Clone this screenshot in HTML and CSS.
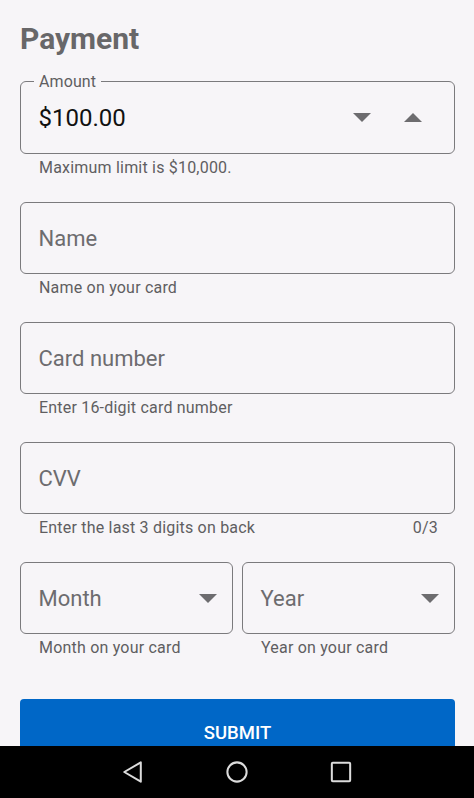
FILE: index.html
```html
<!DOCTYPE html>
<html lang="en">
<head>
<meta charset="utf-8">
<title>Payment</title>
<link rel="stylesheet" href="styles.css">
</head>
<body>
<main class="page">
  <h1 class="title">Payment</h1>

  <div class="group">
    <div class="box box-labelled">
      <span class="notch-label">Amount</span>
      <span class="value">$100.00</span>
      <span class="spin">
        <svg class="tri" viewBox="0 0 18 9"><path d="M0 0H18L9 9Z"/></svg>
        <svg class="tri" viewBox="0 0 18 9"><path d="M0 9H18L9 0Z"/></svg>
      </span>
    </div>
    <div class="helper"><span>Maximum limit is $10,000.</span></div>
  </div>

  <div class="group">
    <div class="box"><span class="placeholder">Name</span></div>
    <div class="helper"><span>Name on your card</span></div>
  </div>

  <div class="group">
    <div class="box"><span class="placeholder">Card number</span></div>
    <div class="helper"><span>Enter 16-digit card number</span></div>
  </div>

  <div class="group">
    <div class="box"><span class="placeholder">CVV</span></div>
    <div class="helper"><span>Enter the last 3 digits on back</span><span>0/3</span></div>
  </div>

  <div class="row">
    <div class="group">
      <div class="box box-select"><span class="placeholder">Month</span>
        <svg class="tri" viewBox="0 0 18 9"><path d="M0 0H18L9 9Z"/></svg>
      </div>
      <div class="helper"><span>Month on your card</span></div>
    </div>
    <div class="group">
      <div class="box box-select"><span class="placeholder">Year</span>
        <svg class="tri" viewBox="0 0 18 9"><path d="M0 0H18L9 9Z"/></svg>
      </div>
      <div class="helper"><span>Year on your card</span></div>
    </div>
  </div>

  <button class="submit" type="button">SUBMIT</button>
</main>

<nav class="navbar">
  <svg class="nav-icon" viewBox="0 0 24 24"><path d="M20.5 1.5V22.5L2.5 12Z"/></svg>
  <svg class="nav-icon" viewBox="0 0 24 24"><circle cx="12" cy="12" r="10.5"/></svg>
  <svg class="nav-icon" viewBox="0 0 24 24"><rect x="2" y="2" width="20" height="20" rx="1"/></svg>
</nav>
</body>
</html>
```

FILE: styles.css
```css
html, body {
  margin: 0;
  padding: 0;
}
body {
  background: #f7f5f8;
  font-family: Roboto, "Noto Sans", "Liberation Sans", sans-serif;
  height: 798px;
  overflow: hidden;
}
.page {
  padding: 21px 19px 0 20px;
  display: flex;
  flex-direction: column;
}
.title {
  margin: 0 0 24px 0;
  font-size: 30px;
  line-height: 36px;
  font-weight: 700;
  color: #686769;
}
.group {
  display: flex;
  flex-direction: column;
  margin-bottom: 24.5px;
}
.box {
  position: relative;
  box-sizing: border-box;
  height: 72px;
  border: 1.5px solid #7b7a7d;
  border-radius: 6px;
  display: flex;
  align-items: center;
  padding: 0 15px 0 17.5px;
}
.box-labelled { height: 73px; }
.notch-label {
  position: absolute;
  left: 13px;
  top: -9.5px;
  padding: 0 5px;
  background: #f7f5f8;
  font-size: 16px;
  line-height: 18px;
  letter-spacing: 0.1px;
  color: #5f5e61;
}
.value {
  flex: 1;
  font-size: 24px;
  color: #111;
}
.spin {
  display: flex;
  gap: 33px;
  margin-right: 17px;
}
.tri {
  width: 18px;
  height: 9px;
  fill: #6d6c6f;
  display: block;
}
.placeholder {
  flex: 1;
  font-size: 22px;
  color: #6d6c6f;
}
.helper {
  display: flex;
  justify-content: space-between;
  margin-top: 3.5px;
  padding: 0 17px 0 19px;
  font-size: 16px;
  line-height: 20px;
  letter-spacing: 0.2px;
  color: #5f5e61;
}
.row {
  display: grid;
  grid-template-columns: 1fr 1fr;
  gap: 9px;
}
.submit {
  margin-top: 16.5px;
  height: 68px;
  border: none;
  border-radius: 4px;
  background: #0067c7;
  color: #fff;
  font-family: inherit;
  font-size: 18.5px;
  font-weight: 500;
  padding: 0;
}
.navbar {
  position: fixed;
  left: 0;
  right: 0;
  bottom: 0;
  height: 52px;
  background: #000;
  display: flex;
  justify-content: center;
  align-items: center;
  gap: 82px;
}
.nav-icon {
  width: 22px;
  height: 22px;
  fill: none;
  stroke: #dcdcdc;
  stroke-width: 2.2;
  stroke-linejoin: round;
}
```
